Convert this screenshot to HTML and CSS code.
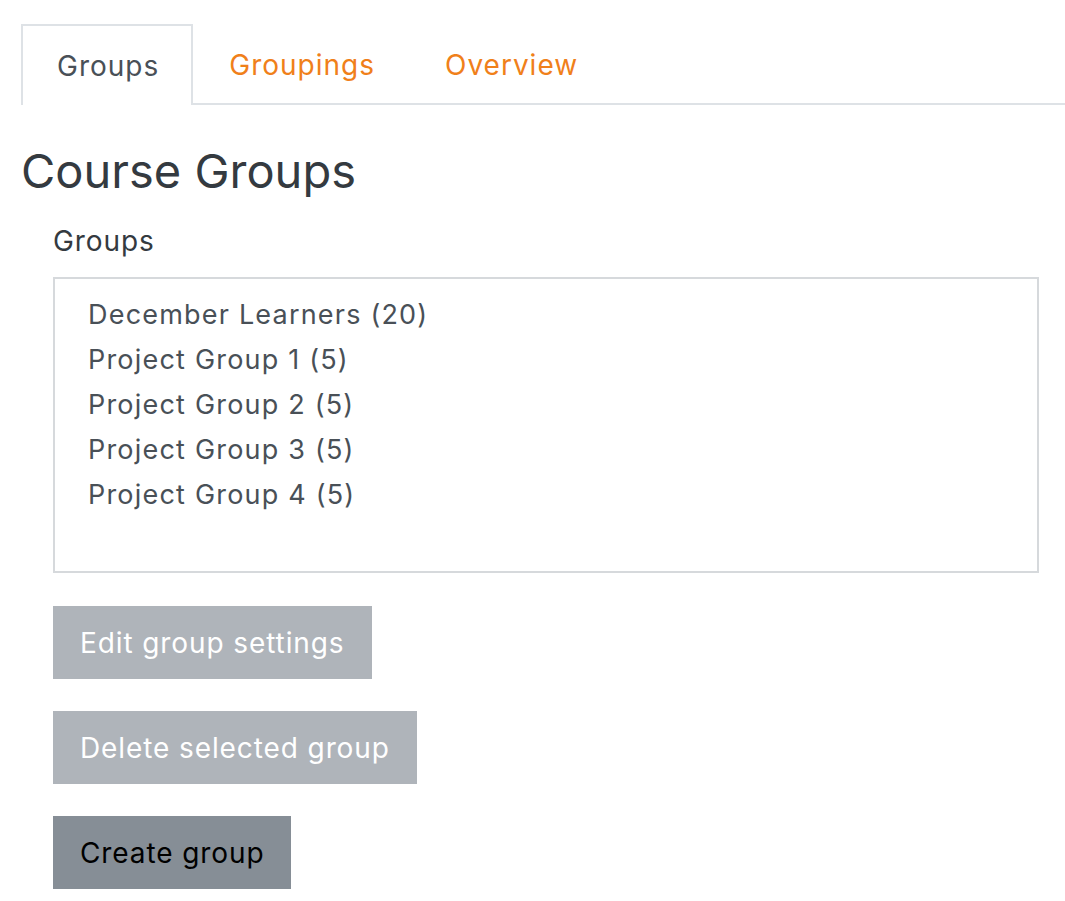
FILE: index.html
```html
<!DOCTYPE html>
<html lang="en">

<head>
    <meta charset="UTF-8">
    <meta name="viewport" content="width=device-width, initial-scale=1.0">
    <title>Course Groups</title>
    <link rel="stylesheet" href="styles.css">
</head>

<body>
    <div class="page">
        <ul class="tabs">
            <li class="tab active">Groups</li>
            <li class="tab"><a href="#">Groupings</a></li>
            <li class="tab"><a href="#">Overview</a></li>
        </ul>

        <h2 class="title">Course Groups</h2>

        <div class="form">
            <label class="label" for="groups">Groups</label>
            <div class="select" id="groups">
                <div class="option">December Learners (20)</div>
                <div class="option">Project Group 1 (5)</div>
                <div class="option">Project Group 2 (5)</div>
                <div class="option">Project Group 3 (5)</div>
                <div class="option">Project Group 4 (5)</div>
            </div>

            <div class="buttons">
                <button class="btn disabled">Edit group settings</button>
                <button class="btn disabled">Delete selected group</button>
                <button class="btn">Create group</button>
            </div>
        </div>
    </div>
</body>

</html>
```

FILE: styles.css
```css
* {
    margin: 0;
    padding: 0;
    box-sizing: border-box;
    list-style: none;
    text-decoration: none;
}

body {
    font-family: Inter, "Liberation Sans", sans-serif;
    color: #495057;
    background: #fff;
}

.page {
    padding: 24px 0 0 21px;
}

/* tab bar */
.tabs {
    display: flex;
    border-bottom: 2px solid #dee2e6;
}

.tab {
    height: 80px;
    padding: 0 32px 0 34px;
    display: flex;
    align-items: center;
    font-size: 28px;
    letter-spacing: 1px;
    border: 2px solid transparent;
    border-bottom: none;
    margin-bottom: -2px;
}

.tab.active {
    border-color: #dee2e6;
    background: #fff;
    height: 81px;
}

.tab a {
    color: #f0801a;
}

.title {
    font-size: 47px;
    font-weight: 400;
    color: #343a40;
    margin-top: 38px;
    line-height: 1.2;
}

.form {
    padding-left: 32px;
    padding-right: 26px;
    margin-top: 22px;
}

.label {
    display: block;
    font-size: 28px;
    letter-spacing: 0.9px;
    line-height: 40px;
    color: #343a40;
}

.select {
    margin-top: 16px;
    height: 296px;
    border: 2px solid #d6d9dc;
    padding: 13px 33px;
}

.option {
    font-size: 27px;
    letter-spacing: 1.2px;
    line-height: 45px;
    color: #495057;
}

.buttons {
    display: flex;
    flex-direction: column;
    align-items: flex-start;
    gap: 32px;
    margin-top: 33px;
}

.btn {
    height: 73px;
    padding: 0 27px;
    border: none;
    font-family: inherit;
    font-size: 28px;
    letter-spacing: 0.9px;
    background: #868e96;
    color: #000;
}

.btn.disabled {
    background: #afb4ba;
    color: #fff;
}
```
